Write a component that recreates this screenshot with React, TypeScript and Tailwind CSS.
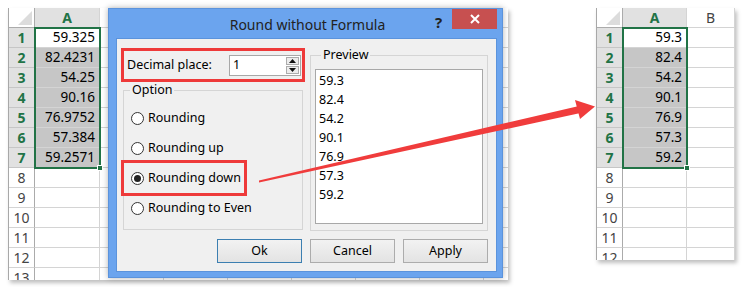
import React from "react";

const leftValues = ["59.325", "82.4231", "54.25", "90.16", "76.9752", "57.384", "59.2571"];
const rightValues = ["59.3", "82.4", "54.2", "90.1", "76.9", "57.3", "59.2"];
const previewValues = ["59.3", "82.4", "54.2", "90.1", "76.9", "57.3", "59.2"];

const font = { fontFamily: '"Noto Sans", "Open Sans", sans-serif' };

interface SheetProps {
  values: string[];
  cols: number[];
  rows: number;
  width: number;
  height: number;
  headers: string[];
}

function Sheet({ values, cols, rows, width, height, headers }: SheetProps) {
  const rowNums = Array.from({ length: rows }, (_, i) => i + 1);
  return (
    <div
      className="relative overflow-hidden bg-white border-l border-[#a8a8a8] shadow-[2px_3px_4px_rgba(0,0,0,0.25)]"
      style={{ width, height }}
    >
      {/* header row */}
      <div className="flex h-[20px]">
        <div className="relative w-[26px] shrink-0 h-[20px] bg-white border-r border-b border-[#ababab]">
          <svg className="absolute right-[2px] bottom-[2px]" width="14" height="14" viewBox="0 0 14 14">
            <polygon points="14,0 14,14 0,14" fill="#dcdcdc" />
          </svg>
        </div>
        {cols.map((w, i) => (
          <div
            key={i}
            className={`shrink-0 h-[20px] flex items-center justify-center text-[14px] border-r border-b border-[#d4d4d4] ${
              i === 0 ? "bg-[#e1e1e1] text-[#217346] font-bold border-b-[#217346]" : "bg-white text-[#444]"
            }`}
            style={{ width: w }}
          >
            {headers[i] ?? ""}
          </div>
        ))}
      </div>
      {rowNums.map((r) => {
        const sel = r <= 7;
        return (
          <div key={r} className="flex h-[20px]">
            <div
              className={`w-[26px] shrink-0 h-[20px] flex items-center justify-center text-[14px] border-r border-b ${
                sel
                  ? "bg-[#e1e1e1] text-[#217346] font-bold border-r-[#217346] border-b-[#c6c6c6]"
                  : "bg-white text-[#444] border-r-[#ababab] border-b-[#d4d4d4]"
              }`}
            >
              {r}
            </div>
            {cols.map((w, i) => (
              <div
                key={i}
                className={`shrink-0 h-[20px] flex items-center justify-end pr-[4px] text-[13.5px] text-black border-r border-b border-[#d4d4d4] ${
                  i === 0 && r >= 2 && r <= 7 ? "bg-[#c6c6c6]" : "bg-white"
                }`}
                style={{ width: w }}
              >
                {i === 0 && sel ? values[r - 1] : ""}
              </div>
            ))}
          </div>
        );
      })}
      {/* selection outline */}
      <div
        className="absolute border-2 border-[#217346] pointer-events-none"
        style={{ left: 25, top: 19, width: cols[0] + 2, height: 142 }}
      />
      <div
        className="absolute w-[6px] h-[6px] bg-[#217346] border border-white"
        style={{ left: 25 + cols[0] - 2, top: 157 }}
      />
    </div>
  );
}

function Radio({ label, checked }: { label: string; checked?: boolean }) {
  return (
    <div className="flex items-center h-[30px] pl-[7px]">
      <div className="w-[13px] h-[13px] rounded-full border border-[#333] bg-white flex items-center justify-center">
        {checked && <div className="w-[7px] h-[7px] rounded-full bg-[#222]" />}
      </div>
      <span className="ml-[4px] text-[12.5px] text-black">{label}</span>
    </div>
  );
}

function Button({ label, primary }: { label: string; primary?: boolean }) {
  return (
    <button
      className={`w-[85px] h-[24px] text-[12.5px] text-black bg-gradient-to-b from-[#f2f2f2] to-[#e3e3e3] border ${
        primary ? "border-[#3c7fb1]" : "border-[#acacac]"
      }`}
    >
      {label}
    </button>
  );
}

function Dialog() {
  return (
    <div
      className="absolute left-[108px] top-[8px] w-[395px] h-[270px] bg-[#6ba4ee] border border-[#5b93dc] shadow-[0_0_6px_rgba(0,0,0,0.3)] flex flex-col"
      style={font}
    >
      {/* title bar */}
      <div className="relative h-[29px] shrink-0 flex items-center justify-center">
        <span className="text-[14px] text-[#222] pl-[4px] pt-[2px]">Round without Formula</span>
        <span className="absolute left-[326px] top-[2px] text-[15px] font-bold text-[#222]">?</span>
        <div className="absolute left-[343px] top-0 w-[45px] h-[20px] bg-[#c75050] flex items-center justify-center">
          <svg width="10" height="10" viewBox="0 0 10 10">
            <path d="M1 1 L9 9 M9 1 L1 9" stroke="white" strokeWidth="2" />
          </svg>
        </div>
      </div>
      {/* body */}
      <div className="relative ml-[7px] mr-[5px] mb-[5px] flex-1 bg-[#f0f0f0] border border-[#5b93dc] px-[4px] pt-[9px] flex flex-col">
        <div className="flex gap-[5px] h-[183px]">
          {/* left column */}
          <div className="w-[184px] flex flex-col">
            <div className="h-[34px] border-[3px] border-[#ee3a3a] flex items-center pl-[3px] pr-[1px]">
              <span className="text-[12.5px] text-black">Decimal place:</span>
              <div className="ml-auto w-[72px] h-[21px] bg-white border border-[#a8a8a8] flex items-center">
                <span className="pl-[3px] text-[12.5px] text-black">1</span>
                <div className="ml-auto mr-[1px] w-[13px] h-[17px] flex flex-col gap-[1px]">
                  <div className="flex-1 bg-[#ececec] border border-[#acacac] flex items-center justify-center">
                    <svg width="7" height="4" viewBox="0 0 7 4">
                      <polygon points="0,4 7,4 3.5,0" fill="#111" />
                    </svg>
                  </div>
                  <div className="flex-1 bg-[#ececec] border border-[#acacac] flex items-center justify-center">
                    <svg width="7" height="4" viewBox="0 0 7 4">
                      <polygon points="0,0 7,0 3.5,4" fill="#111" />
                    </svg>
                  </div>
                </div>
              </div>
            </div>
            <fieldset className="relative mx-[2px] h-[148px] border border-[#d5d5d5] pt-[5px]">
              <legend className="ml-[6px] px-[2px] text-[12.5px] text-black leading-[16px]">Option</legend>
              <Radio label="Rounding" />
              <Radio label="Rounding up" />
              <Radio label="Rounding down" checked />
              <Radio label="Rounding to Even" />
              <div className="absolute left-[-3px] top-[62px] w-[126px] h-[36px] border-[3px] border-[#ee3a3a] pointer-events-none" />
            </fieldset>
          </div>
          {/* preview column */}
          <fieldset className="w-[178px] h-[185px] -mt-[2px] border border-[#d5d5d5] px-[4px] pt-[5px] pb-[6px]">
            <legend className="ml-[6px] px-[2px] text-[12.5px] text-black leading-[18px]">Preview</legend>
            <div className="h-[155px] bg-white border border-[#a8a8a8] pt-[1px] pl-[3px]">
              {previewValues.map((v) => (
                <div key={v} className="h-[19px] leading-[19px] text-[12.5px] text-black">
                  {v}
                </div>
              ))}
            </div>
          </fieldset>
        </div>
        <div className="mt-[8px] flex justify-end gap-[8px] pr-[4px]">
          <Button label="Ok" primary />
          <Button label="Cancel" />
          <Button label="Apply" />
        </div>
      </div>
    </div>
  );
}

export default function App() {
  return (
    <div className="relative w-[744px] h-[287px] bg-white overflow-hidden" style={font}>
      <div className="flex pt-[8px] pl-[8px]">
        <Sheet
          values={leftValues}
          cols={[65, 64, 64, 64, 64, 64, 64, 64]}
          rows={13}
          width={500}
          height={272}
          headers={["A"]}
        />
        <div className="ml-[88px]">
          <Sheet
            values={rightValues}
            cols={[64, 48]}
            rows={12}
            width={139}
            height={252}
            headers={["A", "B"]}
          />
        </div>
      </div>
      <Dialog />
      {/* arrow */}
      <svg className="absolute left-0 top-0 pointer-events-none" width="744" height="287" viewBox="0 0 744 287">
        <polygon points="259,180.5 579,106 580.5,113 259,182.5" fill="#f03c3c" />
        <polygon points="575,100 595,106.5 580,119" fill="#f03c3c" />
      </svg>
    </div>
  );
}
